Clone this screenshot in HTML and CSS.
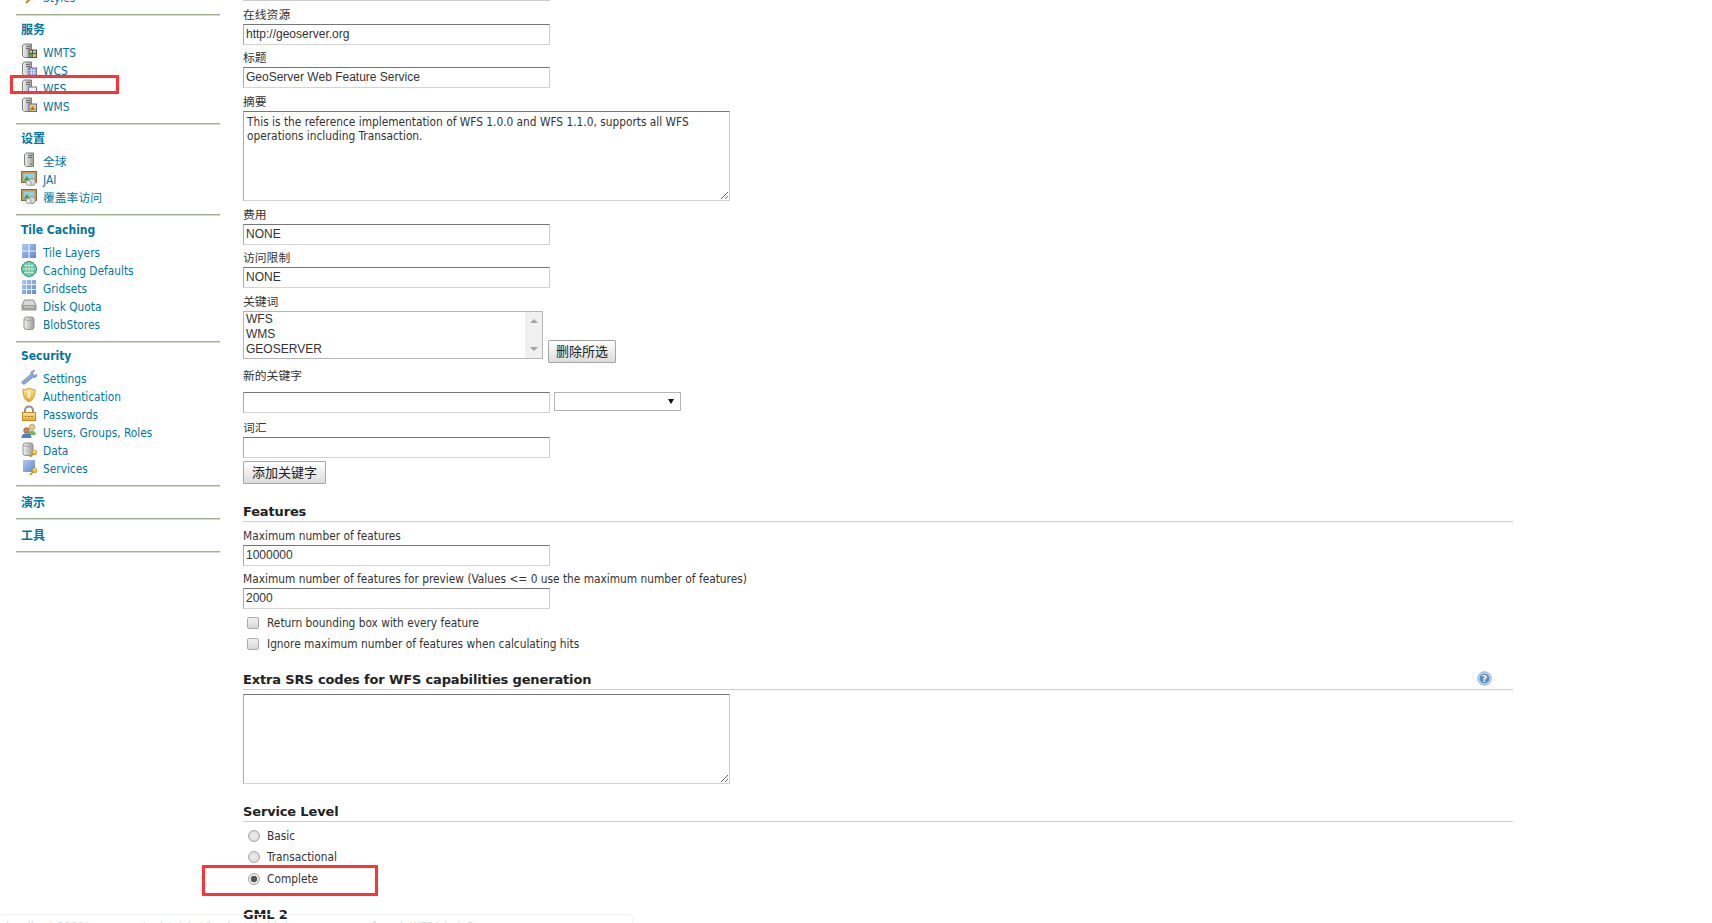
FILE: index.html
```html
<!DOCTYPE html>
<html lang="zh-CN">
<head>
  <meta charset="UTF-8" />
  <meta name="viewport" content="width=device-width, initial-scale=1.0" />
  <title>GeoServer: WFS</title>
  <link rel="stylesheet" href="styles.css">
</head>
<body>
<svg class="defs" width="0" height="0">
  <defs>
    <linearGradient id="srv" x1="0" y1="0" x2="1" y2="0">
      <stop offset="0" stop-color="#f4f4f2"/><stop offset="1" stop-color="#9a9c98"/>
    </linearGradient>
    <linearGradient id="blue" x1="0" y1="0" x2="1" y2="1">
      <stop offset="0" stop-color="#b4caf0"/><stop offset="1" stop-color="#5f86cc"/>
    </linearGradient>
    <linearGradient id="gold" x1="0" y1="0" x2="0" y2="1">
      <stop offset="0" stop-color="#ffe9a0"/><stop offset="1" stop-color="#e8a52c"/>
    </linearGradient>
    <symbol id="server" viewBox="0 0 16 16">
      <path d="M1.500 2.500 3.500 1h7v13.500h-7l-2-1.500z" fill="url(#srv)" stroke="#7c7f7a"/>
      <path d="M5 3.500h4M5 5.500h4" stroke="#6d706c"/>
    </symbol>
    <symbol id="key" viewBox="0 0 16 16">
      <path d="M5 15l5-5" stroke="#c98f1e" stroke-width="2.200" fill="none"/>
      <circle cx="11.500" cy="8.500" r="3.200" fill="url(#gold)" stroke="#c98f1e"/>
    </symbol>
    <symbol id="picture" viewBox="0 0 16 16">
      <rect x=".5" y="1.500" width="15" height="11" fill="#c69a55" stroke="#8a6a35"/>
      <rect x="2.500" y="3.500" width="11" height="7" fill="#8ed0e8"/>
      <path d="M2.500 10.500 6 6l3 4.500z" fill="#4da04a"/>
      <circle cx="11" cy="12" r="3.500" fill="#d8d8d6" stroke="#8f908c"/>
      <circle cx="7.500" cy="13" r="2.500" fill="#ecece8" stroke="#a0a19c"/>
    </symbol>
    <symbol id="grid4" viewBox="0 0 16 16">
      <rect x="1" y="1" width="14" height="14" fill="url(#blue)"/>
      <path d="M8 1v14M1 8h14" stroke="#e4edfb" stroke-width="1.200"/>
    </symbol>
    <symbol id="grid9" viewBox="0 0 16 16">
      <rect x="1" y="1" width="14" height="14" fill="url(#blue)"/>
      <path d="M5.500 1v14M10.500 1v14M1 5.500h14M1 10.500h14" stroke="#e4edfb"/>
    </symbol>
    <symbol id="globe" viewBox="0 0 16 16">
      <path d="M8 .5C12 .5 15.500 4 15.500 8S12 15.500 8 15.500.5 12 .5 8 4 .5 8 .5z" fill="#5fc09a" stroke="#1e8f88"/>
      <path d="M8 1v14M1 8h14M3 4.500h10M3 11.500h10M5 2.500v11M11 2.500v11" stroke="#d6efe6" stroke-width=".8"/>
    </symbol>
    <symbol id="disk" viewBox="0 0 16 16">
      <path d="M3.500 3h9l2.500 5v5H1V8z" fill="#d7d7d5" stroke="#8d8d8b"/>
      <rect x="1.500" y="8" width="13" height="4.500" fill="#9b9b99"/>
      <path d="M3 10h10" stroke="#e2e2e0"/>
    </symbol>
    <symbol id="db" viewBox="0 0 16 16">
      <rect x="3" y="2" width="10" height="12.500" rx="2.500" fill="url(#srv)" stroke="#8f908c"/>
      <path d="M3.500 4.500c2 1.300 7 1.300 9 0" fill="none" stroke="#a5a6a2"/>
    </symbol>
    <symbol id="wrench" viewBox="0 0 16 16">
      <path d="M.5 13 9.500 5.500c-.3-2.500 1.800-4.500 4.500-4l-2.300 2.300.7 2 2 .6 2-2c.3 2.800-2.200 4.800-4.700 4.100l-8 6.500c-1.500.8-3.300-1.100-2.700-1.500z" fill="url(#blue)" stroke="#7a8db0" stroke-width=".7"/>
    </symbol>
    <symbol id="shield" viewBox="0 0 16 16">
      <path d="M8 1c2 1.300 4 1.700 6 1.700 0 6-1.500 10-6 12.300-4.500-2.300-6-6.300-6-12.300 2 0 4-.4 6-1.700z" fill="url(#gold)" stroke="#d69a26"/>
      <path d="M8 4v7" stroke="#fff6cf" stroke-width="2.500"/>
    </symbol>
    <symbol id="lock" viewBox="0 0 16 16">
      <path d="M4 8V5.500a4 4 0 0 1 8 0V8" fill="none" stroke="#8e8e8e" stroke-width="2"/>
      <rect x="1.500" y="7.500" width="13" height="8" fill="url(#gold)" stroke="#c18a22"/>
      <path d="M4 11.500h8" stroke="#a87a20" stroke-dasharray="2 1"/>
    </symbol>
    <symbol id="users" viewBox="0 0 16 16">
      <circle cx="11" cy="4" r="2.800" fill="#e8c58a" stroke="#a98a45" stroke-width=".6"/>
      <path d="M7 12c0-3 2-4.500 4-4.500s4 1.500 4 4.500z" fill="#76b860"/>
      <circle cx="5.500" cy="7.500" r="2.800" fill="#c4855a" stroke="#7a4a30" stroke-width=".6"/>
      <path d="M.5 15c0-3.500 2-4.500 5-4.500s5 1 5 4.500z" fill="#4f7fc4"/>
    </symbol>
    <symbol id="help" viewBox="0 0 16 16">
      <circle cx="8" cy="8" r="7.200" fill="#bcd2ee" stroke="#8fb0dc"/>
      <circle cx="8" cy="8" r="5.200" fill="#5f8cc4"/>
    </symbol>
  </defs>
</svg>

<div class="page">
  <aside class="sidebar">
    <section class="menu-section">
      <ul>
        <li><svg class="icon"><use href="#key"/></svg><a href="#">Styles</a></li>
      </ul>
    </section>
    <section class="menu-section">
      <h3>服务</h3>
      <ul>
        <li><svg class="icon" viewBox="0 0 16 16"><use href="#server" width="16" height="16"/><rect x="8" y="7" width="7.500" height="7.500" fill="#e9c04a" stroke="#46507c"/><path d="M8 10.500h7.500M11.500 7v7.500" stroke="#46507c"/><rect x="8.500" y="11" width="3" height="3" fill="#5aa84e"/></svg><a href="#">WMTS</a></li>
        <li><svg class="icon" viewBox="0 0 16 16"><use href="#server" width="16" height="16"/><rect x="8" y="7" width="7.500" height="7.500" fill="#8f9fe0" stroke="#5a68b0"/><path d="M8 9.500h7.500M8 12h7.500M10.500 7v7.500M13 7v7.500" stroke="#dfe4f8" stroke-width=".8"/></svg><a href="#">WCS</a></li>
        <li><svg class="icon" viewBox="0 0 16 16"><use href="#server" width="16" height="16"/><rect x="7.500" y="8" width="8" height="6.500" fill="#f2f4fc" stroke="#6670bc"/></svg><a href="#">WFS</a></li>
        <li><svg class="icon" viewBox="0 0 16 16"><use href="#server" width="16" height="16"/><rect x="8" y="7" width="7.500" height="7.500" fill="#e6d070" stroke="#5a68a0"/><path d="M9 13l2.500-4 3 4" fill="#d0623e"/></svg><a href="#">WMS</a></li>
      </ul>
    </section>
    <section class="menu-section">
      <h3>设置</h3>
      <ul>
        <li><svg class="icon" viewBox="0 0 16 16"><use href="#server" width="16" height="16" x="2"/><circle cx="10" cy="12" r=".8" fill="#3a9a3a"/></svg><a href="#">全球</a></li>
        <li><svg class="icon"><use href="#picture"/></svg><a href="#">JAI</a></li>
        <li><svg class="icon"><use href="#picture"/></svg><a href="#">覆盖率访问</a></li>
      </ul>
    </section>
    <section class="menu-section">
      <h3>Tile Caching</h3>
      <ul>
        <li><svg class="icon"><use href="#grid4"/></svg><a href="#">Tile Layers</a></li>
        <li><svg class="icon"><use href="#globe"/></svg><a href="#">Caching Defaults</a></li>
        <li><svg class="icon"><use href="#grid9"/></svg><a href="#">Gridsets</a></li>
        <li><svg class="icon"><use href="#disk"/></svg><a href="#">Disk Quota</a></li>
        <li><svg class="icon"><use href="#db"/></svg><a href="#">BlobStores</a></li>
      </ul>
    </section>
    <section class="menu-section security">
      <h3>Security</h3>
      <ul>
        <li><svg class="icon"><use href="#wrench"/></svg><a href="#">Settings</a></li>
        <li><svg class="icon"><use href="#shield"/></svg><a href="#">Authentication</a></li>
        <li><svg class="icon"><use href="#lock"/></svg><a href="#">Passwords</a></li>
        <li><svg class="icon"><use href="#users"/></svg><a href="#">Users, Groups, Roles</a></li>
        <li><svg class="icon" viewBox="0 0 16 16"><use href="#db" width="16" height="16" x="-1"/><use href="#key" width="12" height="12" x="5" y="5"/></svg><a href="#">Data</a></li>
        <li><svg class="icon" viewBox="0 0 16 16"><rect x="2" y="1" width="12" height="12" fill="url(#blue)"/><use href="#key" width="12" height="12" x="5" y="5"/></svg><a href="#">Services</a></li>
      </ul>
    </section>
    <section class="menu-section solo"><h3>演示</h3></section>
    <section class="menu-section solo"><h3>工具</h3></section>
  </aside>

  <main class="content">
    <div class="cut-input"></div>

    <label class="field-label">在线资源</label>
    <input class="text-input" type="text" value="http://geoserver.org">
    <label class="field-label">标题</label>
    <input class="text-input" type="text" value="GeoServer Web Feature Service">
    <label class="field-label gap">摘要</label>
    <textarea class="text-area">This is the reference implementation of WFS 1.0.0 and WFS 1.1.0, supports all WFS operations including Transaction.</textarea>
    <label class="field-label">费用</label>
    <input class="text-input" type="text" value="NONE">
    <label class="field-label">访问限制</label>
    <input class="text-input" type="text" value="NONE">

    <label class="field-label gap">关键词</label>
    <div class="keywords">
      <div class="listbox">
        <div class="listbox-items">
          <div>WFS</div>
          <div>WMS</div>
          <div>GEOSERVER</div>
        </div>
        <div class="listbox-scroll"><span class="arrow-up"></span><span class="arrow-down"></span></div>
      </div>
      <button class="btn" type="button">删除所选</button>
    </div>

    <label class="field-label new-keyword">新的关键字</label>
    <div class="lang-row">
      <input class="text-input" type="text">
      <div class="dropdown"><span class="dropdown-arrow"></span></div>
    </div>
    <label class="field-label vocab">词汇</label>
    <input class="text-input" type="text">
    <button class="btn btn-add" type="button">添加关键字</button>

    <h3 class="group-title features">Features</h3>
    <label class="field-label first">Maximum number of features</label>
    <input class="text-input" type="text" value="1000000">
    <label class="field-label">Maximum number of features for preview (Values &lt;= 0 use the maximum number of features)</label>
    <input class="text-input" type="text" value="2000">
    <div class="check-row first"><span class="checkbox"></span>Return bounding box with every feature</div>
    <div class="check-row"><span class="checkbox"></span>Ignore maximum number of features when calculating hits</div>

    <h3 class="group-title srs">Extra SRS codes for WFS capabilities generation
      <svg class="help" viewBox="0 0 16 16"><use href="#help" width="16" height="16"/><text x="8" y="11.500" text-anchor="middle" class="help-mark">?</text></svg>
    </h3>
    <textarea class="text-area srs-area"></textarea>

    <h3 class="group-title level">Service Level</h3>
    <div class="radio-row"><span class="radio"></span>Basic</div>
    <div class="radio-row"><span class="radio"></span>Transactional</div>
    <div class="radio-row"><span class="radio checked"></span>Complete</div>

    <h3 class="gml-title">GML 2</h3>
  </main>
</div>

<div class="mark mark-wfs"></div>
<div class="mark mark-complete"></div>
<div class="status-ghost">localhost:8080/geoserver/web/wicket/bookmarkable/org.geoserver.wfs.web.WFSAdminPage</div>
</body>
</html>
```

FILE: styles.css
```css
* {
  box-sizing: border-box;
}
html, body {
  height: 923px;
  overflow: hidden;
}
body {
  margin: 0;
  background: #fff;
  color: #333;
  font-family: "DejaVu Sans", "Noto Sans CJK SC", sans-serif;
  font-stretch: condensed;
  font-size: 11.800px;
}
.defs {
  position: absolute;
}
.page {
  display: flex;
  align-items: flex-start;
  margin-top: -12px;
}

/* sidebar */
.sidebar {
  width: 204px;
  margin-left: 16px;
  flex: none;
}
.menu-section {
  padding-bottom: 8px;
  border-bottom: 1px solid #a4ae90;
  box-shadow: 0 1px 0 #d6dbc9;
}
.menu-section h3 {
  margin: 6px 0 4px 5px;
  font-size: 12px;
  line-height: 18px;
  font-weight: bold;
  color: #0076a1;
}
.menu-section.security h3 {
  margin-top: 5px;
}
.menu-section.solo {
  padding-bottom: 6px;
}
.menu-section.solo h3 {
  margin: 8px 0 0 5px;
}
.menu-section ul {
  list-style: none;
  margin: 0;
  padding: 0;
}
.menu-section li {
  display: flex;
  align-items: center;
  height: 18px;
  padding-left: 5px;
}
.menu-section a {
  color: #0076a1;
  text-decoration: none;
  line-height: 18px;
  padding-top: 1px;
}
.icon {
  width: 16px;
  height: 16px;
  margin: -2px 6px 0 0;
  flex: none;
}

/* form */
.content {
  width: 1270px;
  margin-left: 23px;
  flex: none;
  padding-top: 12px;
}
.cut-input {
  width: 307px;
  height: 1px;
  margin-bottom: 1px;
  background: #ccc;
}
.field-label {
  display: block;
  padding-top: 4px;
  line-height: 18px;
  color: #333;
}
.field-label.gap {
  padding-top: 5px;
}
.field-label.vocab {
  padding-top: 6px;
}
.text-input, .text-area {
  display: block;
  border: 1px solid;
  border-color: #767676 #ccc #d4d4d4 #aaa;
  padding: 0 2px 2px;
  background: #fff;
  color: #333;
  font-family: "Liberation Sans", sans-serif;
  font-size: 12px;
  outline: none;
  border-radius: 0;
}
.text-input {
  width: 307px;
  height: 21px;
}
.text-area {
  width: 487px;
  height: 90px;
  font-family: "DejaVu Sans", sans-serif;
  font-stretch: condensed;
  font-size: 11.800px;
  line-height: 14px;
  margin-bottom: 1px;
  padding: 3px 3px;
}
.keywords {
  display: flex;
  align-items: flex-end;
  gap: 5px;
  height: 52px;
}
.listbox {
  display: flex;
  width: 300px;
  height: 48px;
  margin-bottom: 4px;
  border: 1px solid #b5b5b5;
}
.listbox-items {
  flex: 1;
  padding: 0 2px;
  font-family: "Liberation Sans", sans-serif;
  font-size: 12px;
  line-height: 15px;
}
.listbox-scroll {
  width: 17px;
  background: #f0f0f0;
  display: flex;
  flex-direction: column;
  justify-content: space-between;
  align-items: center;
  padding: 7px 0 7px;
}
.arrow-up {
  border: 4px solid transparent;
  border-top: 0;
  border-bottom: 4px solid #a3a3a3;
}
.arrow-down {
  border: 4px solid transparent;
  border-bottom: 0;
  border-top: 4px solid #a3a3a3;
}
.btn {
  height: 23px;
  padding: 0 7px 2px;
  border: 1px solid #a6a6a6;
  border-radius: 1px;
  background: linear-gradient(#fff, #dcdcdc);
  color: #222;
  font-family: "Noto Sans CJK SC", sans-serif;
  font-size: 13px;
  line-height: 18px;
}
.btn-add {
  display: block;
  margin-top: 3px;
  padding: 0 8px 2px;
}
.new-keyword {
  margin: 0 0 7px;
  padding-top: 4px;
}
.lang-row {
  display: flex;
  align-items: flex-start;
  gap: 4px;
}
.dropdown {
  display: flex;
  align-items: center;
  justify-content: flex-end;
  width: 127px;
  height: 19px;
  padding-right: 6px;
  border: 1px solid #b5b5b5;
}
.dropdown-arrow {
  border: 3.500px solid transparent;
  border-bottom: 0;
  border-top: 5px solid #111;
}
.group-title {
  display: flex;
  justify-content: space-between;
  align-items: center;
  margin: 0;
  height: 20px;
  border-bottom: 1px solid #c9d99b;
  font-family: "DejaVu Sans", sans-serif;
  font-stretch: normal;
  font-size: 13px;
  letter-spacing: -0.150px;
  line-height: 19px;
  font-weight: bold;
  color: #222;
}
.features {
  margin-top: 18px;
}
.field-label.first {
  padding-top: 5px;
}
.check-row, .radio-row {
  display: flex;
  align-items: center;
  height: 21px;
  padding-left: 4px;
}
.check-row.first {
  margin-top: 3px;
}
.checkbox {
  width: 12px;
  height: 12px;
  margin-right: 8px;
  border: 1px solid #ababab;
  border-radius: 2px;
  background: linear-gradient(#f2f2f2, #d6d6d6);
}
.srs {
  margin-top: 16px;
  padding-right: 21px;
}
.help {
  width: 15px;
  height: 15px;
  margin-top: -3px;
}
.help-mark {
  fill: #fff;
  font-family: "DejaVu Sans", sans-serif;
  font-size: 10px;
  font-weight: bold;
}
.srs-area {
  margin-top: 4px;
}
.level {
  margin-top: 18px;
  margin-bottom: 3px;
}
.radio-row {
  height: 21.500px;
}
.radio {
  width: 12px;
  height: 12px;
  margin: 0 7px 0 1px;
  border: 1px solid #a8a8a8;
  border-radius: 50%;
  background: radial-gradient(#eee, #d4d4d4);
}
.radio.checked {
  background: radial-gradient(circle, #555 0 3px, #e6e6e6 3.500px);
}
.gml-title {
  margin: 15px 0 0;
  font-family: "DejaVu Sans", sans-serif;
  font-stretch: normal;
  font-size: 13px;
  letter-spacing: -0.150px;
  line-height: 19px;
  color: #222;
}

/* red boxes drawn over the screenshot */
.mark {
  position: absolute;
  border: 3px solid #f33;
  z-index: 3;
}
.mark-wfs {
  left: 10px;
  top: 75px;
  width: 109px;
  height: 19px;
}
.mark-complete {
  left: 202px;
  top: 865px;
  width: 176px;
  height: 31px;
}
.status-ghost {
  position: absolute;
  left: -1px;
  top: 914px;
  width: 634px;
  height: 24px;
  padding: 5px 0 0 6px;
  border: 1px solid #f2f2f2;
  border-radius: 3px;
  color: #d8d8d8;
  white-space: nowrap;
  overflow: hidden;
  pointer-events: none;
}
```
